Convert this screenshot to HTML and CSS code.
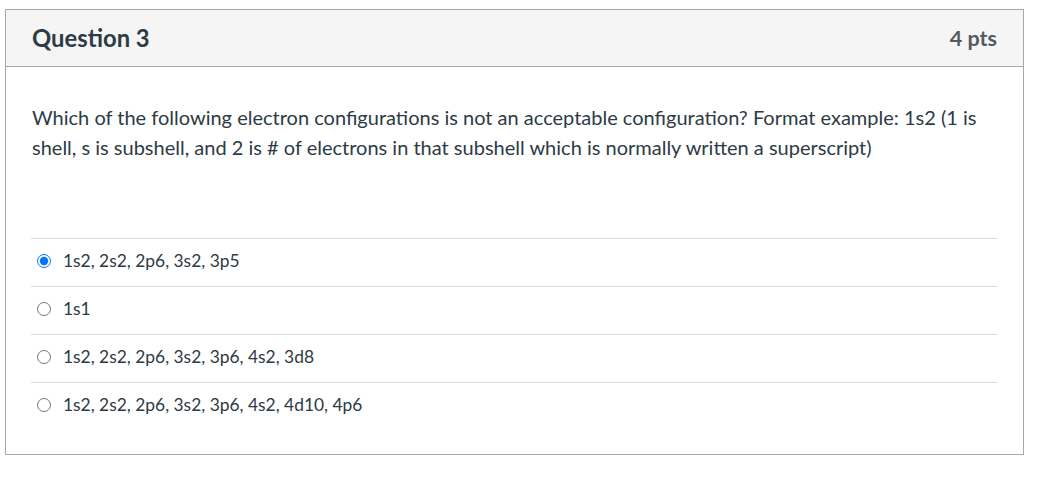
FILE: index.html
```html
<!DOCTYPE html>
<html>
<head>
<meta charset="utf-8">
<link rel="stylesheet" href="styles.css">
</head>
<body>
<div class="question">
  <div class="header">
    <span class="title">Question 3</span>
    <span class="pts">4 pts</span>
  </div>
  <div class="content">
    <p class="text">Which of the following electron configurations is not an acceptable configuration? Format example: 1s2 (1 is shell, s is subshell, and 2 is # of electrons in that subshell which is normally written a superscript)</p>
    <div class="answers">
      <label class="answer"><input type="radio" name="q3" checked><span>1s2, 2s2, 2p6, 3s2, 3p5</span></label>
      <label class="answer"><input type="radio" name="q3"><span>1s1</span></label>
      <label class="answer"><input type="radio" name="q3"><span>1s2, 2s2, 2p6, 3s2, 3p6, 4s2, 3d8</span></label>
      <label class="answer"><input type="radio" name="q3"><span>1s2, 2s2, 2p6, 3s2, 3p6, 4s2, 4d10, 4p6</span></label>
    </div>
  </div>
</div>
</body>
</html>
```
FILE: styles.css
```css
html, body {
  margin: 0;
  padding: 0;
  background: #fff;
}
body {
  font-family: Lato, "Open Sans", sans-serif;
  color: #2d3b45;
  padding: 9px 0 0 5px;
}
.question {
  width: 1017px;
  height: 444px;
  border: 1px solid #a8a8a8;
}
.header {
  height: 57px;
  box-sizing: border-box;
  background: #f5f5f5;
  border-bottom: 1px solid #a8a8a8;
  display: flex;
  justify-content: space-between;
  align-items: center;
  padding: 0 26px;
}
.title {
  font-weight: 700;
  font-size: 23.8px;
  color: #2d3b45;
}
.pts {
  font-weight: 700;
  font-size: 21.5px;
  color: #555a5f;
}
.content {
  padding: 35px 26px 0 26px;
}
.text {
  margin: 0;
  font-size: 20px;
  line-height: 30px;
}
.answers {
  margin-top: 76px;
  margin-left: -1px;
}
.answer {
  display: flex;
  align-items: center;
  gap: 12px;
  height: 43px;
  padding-bottom: 4px;
  border-top: 1px solid #dcdcdc;
  font-size: 17.4px;
  padding-left: 6px;
}
.answer input {
  margin: 0;
  width: 14px;
  height: 14px;
}
```
